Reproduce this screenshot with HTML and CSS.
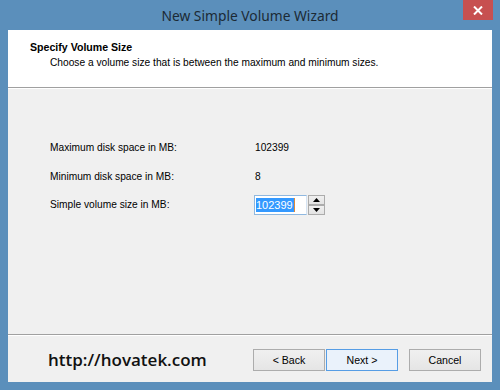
FILE: index.html
```html
<!DOCTYPE html>
<html>
<head>
<meta charset="utf-8">
<link rel="stylesheet" href="styles.css">
</head>
<body>
<div class="window">
  <div class="titlebar">
    <span class="title">New Simple Volume Wizard</span>
    <div class="close">
      <svg width="10" height="9" viewBox="0 0 10 9"><path d="M1 0.5 L9 8.5 M9 0.5 L1 8.5" stroke="#fff" stroke-width="2"/></svg>
    </div>
  </div>
  <div class="client">
    <div class="header">
      <div class="h-title">Specify Volume Size</div>
      <div class="h-desc">Choose a volume size that is between the maximum and minimum sizes.</div>
    </div>
    <div class="main">
      <div class="row r1"><span class="label">Maximum disk space in MB:</span><span class="value">102399</span></div>
      <div class="row r2"><span class="label">Minimum disk space in MB:</span><span class="value">8</span></div>
      <div class="row r3"><span class="label">Simple volume size in MB:</span>
        <div class="spin">
          <div class="input"><span class="sel">102399</span><span class="caret"></span></div>
          <div class="arrows">
            <div class="arr"><svg width="7" height="4" viewBox="0 0 7 4"><path d="M0 4 L7 4 L3.5 0 Z" fill="#000"/></svg></div>
            <div class="arr"><svg width="7" height="4" viewBox="0 0 7 4"><path d="M0 0 L7 0 L3.5 4 Z" fill="#000"/></svg></div>
          </div>
        </div>
      </div>
    </div>
    <div class="footer">
      <span class="brand">http://hovatek.com</span>
      <div class="buttons">
        <div class="btn">&lt; Back</div>
        <div class="btn next">Next &gt;</div>
        <div class="btn cancel">Cancel</div>
      </div>
    </div>
  </div>
</div>
</body>
</html>
```
FILE: styles.css
```css
html, body { margin: 0; padding: 0; }
body { width: 500px; height: 390px; overflow: hidden; font-family: "Liberation Sans", Arial, sans-serif; font-size: 10.2px; color: #000; }
.window { width: 500px; height: 390px; background: #5b8fbb; display: flex; flex-direction: column; }
.titlebar { height: 30px; position: relative; display: flex; align-items: center; justify-content: center; }
.title { font-family: "Noto Sans", "Open Sans", sans-serif; font-size: 13.8px; color: #1c2a35; }
.close { position: absolute; top: 0; left: 463px; width: 30px; height: 20px; background: #c75050; display: flex; align-items: center; justify-content: center; }
.client { margin: 0 8px; height: 352px; background: #f0f0f0; display: flex; flex-direction: column; }
.header { height: 58px; background: #fff; border-bottom: 1px solid #a0a0a0; box-sizing: border-box; padding: 11px 0 0 22px; }
.h-title { font-weight: bold; font-size: 10.6px; line-height: 13px; }
.h-desc { line-height: 13px; margin-top: 2px; padding-left: 20px; }
.main { height: 247px; border-top: 1px solid #fff; border-bottom: 1px solid #a0a0a0; box-sizing: border-box; padding: 48px 0 0 42px; }
.row { display: flex; align-items: center; height: 20px; }
.r2 { margin-top: 9px; }
.r3 { margin-top: 8px; height: 21px; }
.label { width: 205px; }
.spin { display: flex; align-items: stretch; height: 20px; margin-left: -1px; }
.input { width: 50px; height: 18px; background: #fff; border: 1px solid #8fb8e0; border-right-color: #d5e3f2; display: flex; align-items: center; padding-left: 1px; font-size: 11px; }
.sel { background: #3399ff; color: #fff; line-height: 14px; padding: 0 1px 0 0; }
.caret { width: 1px; height: 14px; background: #e08a3a; }
.arrows { display: flex; flex-direction: column; justify-content: space-between; margin-left: 1px; width: 17px; }
.arr { height: 8px; border: 1px solid #acacac; background: linear-gradient(#f0f0f0, #e3e3e3); display: flex; align-items: center; justify-content: center; }
.footer { flex: 1; border-top: 1px solid #fff; display: flex; align-items: flex-start; padding: 13px 11px 0 40px; }
.brand { font-family: "Open Sans", sans-serif; font-size: 17px; font-weight: 600; color: #111; width: 206px; line-height: 22px; }
.buttons { display: flex; margin-left: auto; }
.btn { width: 70px; height: 20px; border: 1px solid #acacac; background: linear-gradient(#f0f0f0, #e5e5e5); display: flex; align-items: center; justify-content: center; margin-left: 1px; font-size: 10.6px; }
.next { border-color: #569de5; background: #eaf2fb; }
.cancel { margin-left: 11px; }
```
